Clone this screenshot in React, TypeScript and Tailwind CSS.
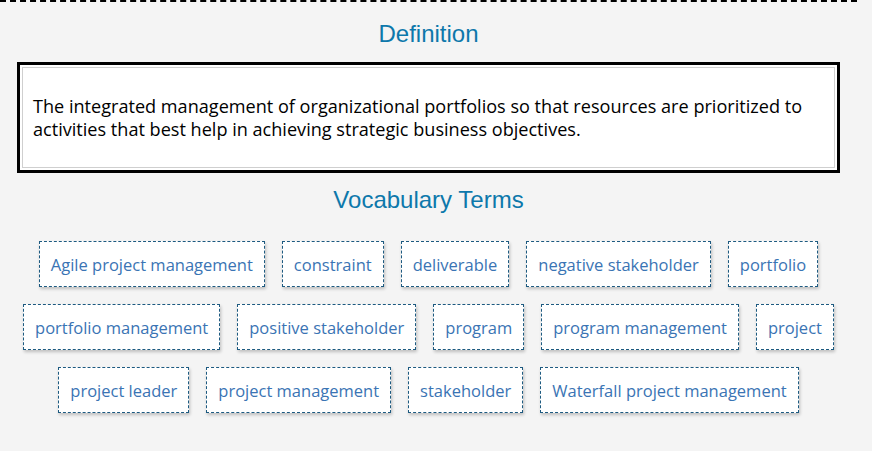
const rows: string[][] = [
  ["Agile project management", "constraint", "deliverable", "negative stakeholder", "portfolio"],
  ["portfolio management", "positive stakeholder", "program", "program management", "project"],
  ["project leader", "project management", "stakeholder", "Waterfall project management"],
];

const Term = ({ label }: { label: string }) => (
  <div className="border border-dashed border-[#1d5a80] bg-white px-[11px] pt-[11px] pb-[9px] text-[16.5px] leading-[24px] text-[#3a74b4] shadow-[1px_2px_3px_rgba(0,0,0,0.22)]">
    {label}
  </div>
);

export default function App() {
  return (
    <div className="min-h-[451px] w-full bg-[#f4f4f4]">
      <div className="w-[857px] border-t-2 border-dashed border-black" style={{ fontFamily: '"Open Sans", sans-serif' }}>
        <h2 className="mt-[18px] text-center text-[24px] leading-[28px] text-[#0d78ab]" style={{ fontFamily: '"Liberation Sans", Arial, sans-serif' }}>
          Definition
        </h2>
        <div className="mx-[17px] mt-[14px] border-[3px] border-black bg-white p-[2px]">
          <div className="border border-[#cfcfcf] px-[10px] pt-[27px] pb-[26px] text-[18.1px] leading-[23px] text-black">
            The integrated management of organizational portfolios so that resources are prioritized to activities that
            best help in achieving strategic business objectives.
          </div>
        </div>
        <h2 className="mt-[13px] text-center text-[24px] leading-[28px] text-[#0d78ab]" style={{ fontFamily: '"Liberation Sans", Arial, sans-serif' }}>
          Vocabulary Terms
        </h2>
        <div className="mt-[27px] flex flex-col gap-[17px]">
          {rows.map((row, i) => (
            <div key={i} className="flex justify-center gap-[17px]">
              {row.map((t) => (
                <Term key={t} label={t} />
              ))}
            </div>
          ))}
        </div>
      </div>
    </div>
  );
}
